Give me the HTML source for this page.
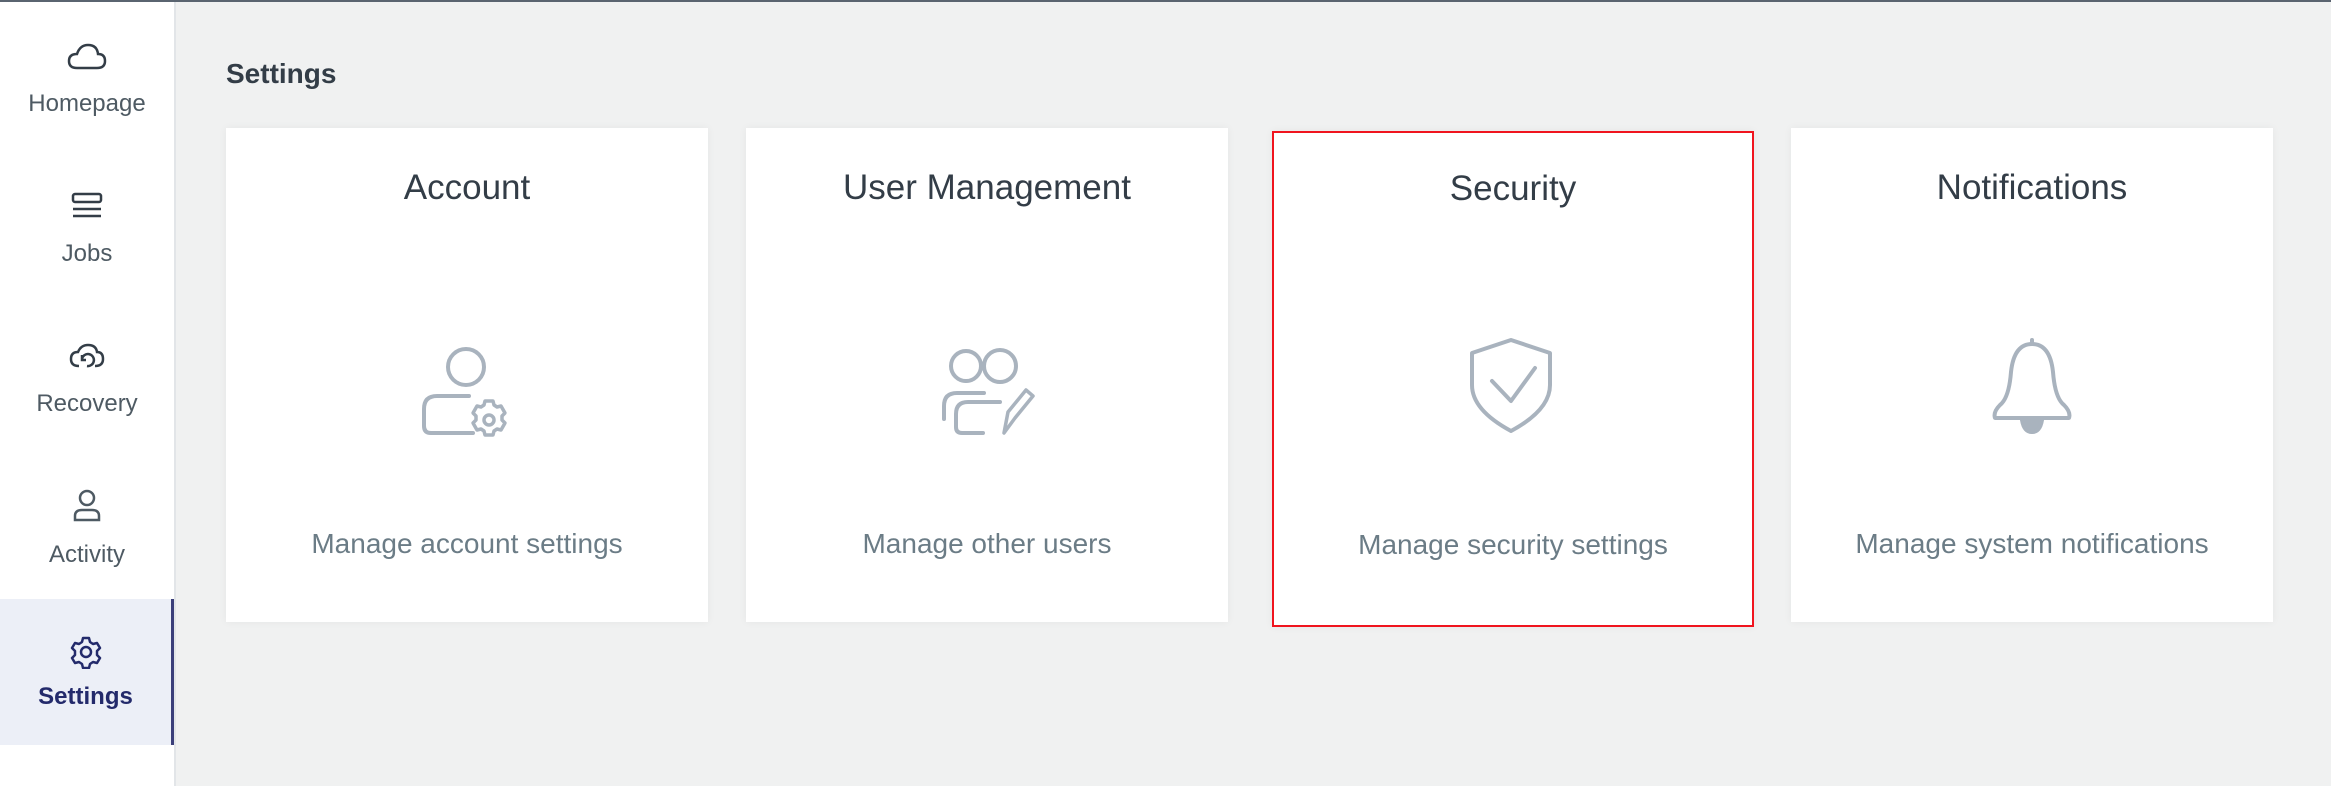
<!DOCTYPE html>
<html><head><meta charset="utf-8"><style>
*{margin:0;padding:0;box-sizing:border-box}
body{width:2331px;height:786px;background:#f0f1f1;font-family:"Liberation Sans",sans-serif;position:relative;overflow:hidden}
.top{position:absolute;left:0;top:0;width:2331px;height:2px;background:#5a6470}
.side{position:absolute;left:0;top:2px;width:176px;height:784px;background:#fff;border-right:2px solid #e2e5e8}
.item{position:absolute;left:0;width:174px;text-align:center;font-size:24px;color:#4e5a63}
.item svg{margin-bottom:18px!important}
.active{background:#eceff7;border-right:3px solid #3b3f7a;color:#232a6b;font-weight:bold}
.active svg{margin-bottom:14px!important}
h1{position:absolute;left:226px;top:58px;font-size:28px;font-weight:bold;color:#333d47}
.card{position:absolute;top:128px;width:482px;height:494px;background:#fff;box-shadow:0 0 8px rgba(0,0,0,.05)}
.card .t{position:absolute;width:100%;text-align:center;font-size:35px;color:#333d47}
.card .d{position:absolute;width:100%;text-align:center;font-size:28px;color:#6b7c86}
</style></head><body>
<div class="top"></div>
<div class="side">
 <div class="item" style="top:40px;height:120px"><svg width="40" height="30" viewBox="0 0 40 30" style="display:block;margin:0 auto"><path d="M10,26 Q2,26 2,19 Q2,12 10,12 Q13,3 21,3 Q30,3 31,12 Q38,12 38,19 Q38,26 30,26 Z" fill="none" stroke="#333d47" stroke-width="2.5"/></svg>Homepage</div>
 <div class="item" style="top:190px;height:120px"><svg width="34" height="30" viewBox="0 0 34 30" style="display:block;margin:0 auto"><rect x="3" y="2" width="28" height="8" rx="2" fill="none" stroke="#333d47" stroke-width="2.5"/><path d="M3,17H31M3,24H31" stroke="#333d47" stroke-width="2.5"/></svg>Jobs</div>
 <div class="item" style="top:340px;height:120px"><svg width="36" height="30" viewBox="0 0 36 30" style="display:block;margin:0 auto"><path d="M10,24 Q2,24 2,17 Q2,10 9,10 Q12,3 19,3 Q27,3 28,10 Q34,10 34,17 Q34,24 26,24" fill="none" stroke="#333d47" stroke-width="2.5"/><path d="M13,17 A6,6 0 1 1 18,24 M13,13 V18 H17" fill="none" stroke="#333d47" stroke-width="2.5"/></svg>Recovery</div>
 <div class="item" style="top:487px;height:120px"><svg width="30" height="34" viewBox="0 0 30 34" style="display:block;margin:0 auto"><circle cx="15" cy="9" r="7" fill="none" stroke="#4e5a63" stroke-width="2.5"/><path d="M3,31 V27 Q3,21 10,21 H20 Q27,21 27,27 V31 Z" fill="none" stroke="#4e5a63" stroke-width="2.5"/></svg>Activity</div>
 <div class="item active" style="top:597px;height:146px;padding-top:36px"><svg width="34" height="34" viewBox="0 0 34 34" style="display:block;margin:0 auto"><path d="M14,3h6l1,4 3,2 4-1 3,5-3,3v4l3,3-3,5-4-1-3,2-1,4h-6l-1-4-3-2-4,1-3-5 3-3v-4l-3-3 3-5 4,1 3-2z" fill="none" stroke="#232a6b" stroke-width="2.5" stroke-linejoin="round"/><circle cx="17" cy="17" r="5" fill="none" stroke="#232a6b" stroke-width="2.5"/></svg>Settings</div>
</div>
<h1>Settings</h1>
<div class="card" style="left:226px"><div class="t" style="top:40px">Account</div><div class="d" style="top:400px">Manage account settings</div></div>
<div class="card" style="left:746px"><div class="t" style="top:40px">User Management</div><div class="d" style="top:400px">Manage other users</div></div>
<div class="card" style="left:1272px;top:131px;height:496px;border:2px solid #f0141e"><div class="t" style="top:36px">Security</div><div class="d" style="top:396px">Manage security settings</div></div>
<div class="card" style="left:1791px"><div class="t" style="top:40px">Notifications</div><div class="d" style="top:400px">Manage system notifications</div></div>
<svg width="2331" height="786" style="position:absolute;left:0;top:0" fill="none" stroke="#a9b3be" stroke-width="4" stroke-linejoin="round" stroke-linecap="round">
 <circle cx="466" cy="367" r="18"/>
 <path d="M473,433 H431 Q424,433 424,426 V409 Q424,396 437,396 H469"/>
 <path d="M485,401h8l1,4 3,2 4-1 4,7-3,3v4l3,3-4,7-4-1-3,2-1,4h-8l-1-4-3-2-4,1-4-7 3-3v-4l-3-3 4-7 4,1 3-2z" stroke-width="3.5"/>
 <circle cx="489" cy="420" r="5" stroke-width="3.5"/>
 <circle cx="966" cy="366" r="15"/><circle cx="1000" cy="366" r="16"/>
 <path d="M944,419 V406 Q944,393 957,393 H984"/>
 <path d="M983,433 H962 Q956,433 956,427 V414 Q956,402 968,402 H1000"/>
 <path d="M1008,412 L1026,390 L1033,396 L1015,418 L1004,433 Z" stroke-width="3.5"/>
 <path d="M1511,340 L1550,353 V385 Q1550,410 1511,431 Q1472,410 1472,385 V353 Z"/>
 <path d="M1492,381 L1511,401 L1535,368"/>
 <path d="M2032,340 V344 M2032,344 Q2014,344 2011,372 Q2009,398 2000,405 Q1993,412 1995,418 H2069 Q2071,412 2064,405 Q2055,398 2053,372 Q2050,344 2032,344 Z"/>
 <path d="M2022,420 Q2024,432 2032,432 Q2040,432 2042,420 Z" fill="#a9b3be"/>
</svg>
</body></html>
